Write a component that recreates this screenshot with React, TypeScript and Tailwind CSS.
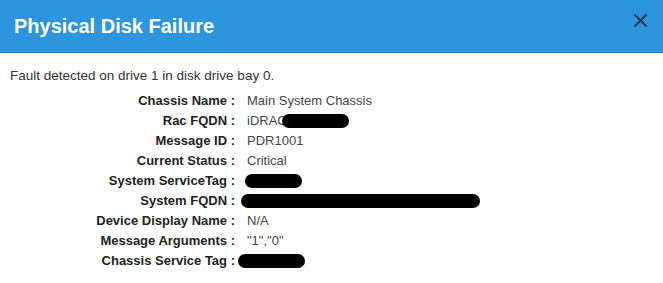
const rows: { label: string; value?: string; blob?: { w: number; ml: number }; prefix?: string }[] = [
  { label: "Chassis Name", value: "Main System Chassis" },
  { label: "Rac FQDN", prefix: "iDRAC", blob: { w: 67, ml: -5 } },
  { label: "Message ID", value: "PDR1001" },
  { label: "Current Status", value: "Critical" },
  { label: "System ServiceTag", blob: { w: 57, ml: -2 } },
  { label: "System FQDN", blob: { w: 239, ml: -6 } },
  { label: "Device Display Name", value: "N/A" },
  { label: "Message Arguments", value: "\"1\",\"0\"" },
  { label: "Chassis Service Tag", blob: { w: 67, ml: -9 } },
];

function App() {
  return (
    <div
      className="w-[663px] h-[283px] bg-white overflow-hidden"
      style={{ fontFamily: '"Liberation Sans", Arial, sans-serif' }}
    >
      {/* Header */}
      <div className="h-[53px] bg-[#2d94dd] border-b border-[#2280c4] flex items-center justify-between pl-[14px] pr-[15px]">
        <h1 className="text-[20px] font-bold text-white leading-none">Physical Disk Failure</h1>
        <svg width="15" height="15" viewBox="0 0 15 15" className="mb-[11px]">
          <path d="M1.5 1.5 L13.5 13.5 M13.5 1.5 L1.5 13.5" stroke="#1d3a57" strokeWidth="2" />
        </svg>
      </div>

      {/* Body */}
      <div className="pt-[13px] pl-[10px]">
        <p className="text-[13.5px] leading-[20px] text-[#333]">Fault detected on drive 1 in disk drive bay 0.</p>
        <div className="mt-[5px] flex flex-col">
          {rows.map((r) => (
            <div key={r.label} className="flex items-center h-[20px] text-[13px]">
              <div className="w-[225px] text-right font-bold text-[#222] whitespace-nowrap">
                {r.label} :
              </div>
              <div className="pl-[12px] flex items-center text-[#444] whitespace-nowrap">
                {r.prefix && <span>{r.prefix}</span>}
                {r.value && <span>{r.value}</span>}
                {r.blob && (
                  <span
                    className="inline-block h-[14px] rounded-full bg-black"
                    style={{ width: r.blob.w, marginLeft: r.blob.ml }}
                  />
                )}
              </div>
            </div>
          ))}
        </div>
      </div>
    </div>
  );
}

export default App;
